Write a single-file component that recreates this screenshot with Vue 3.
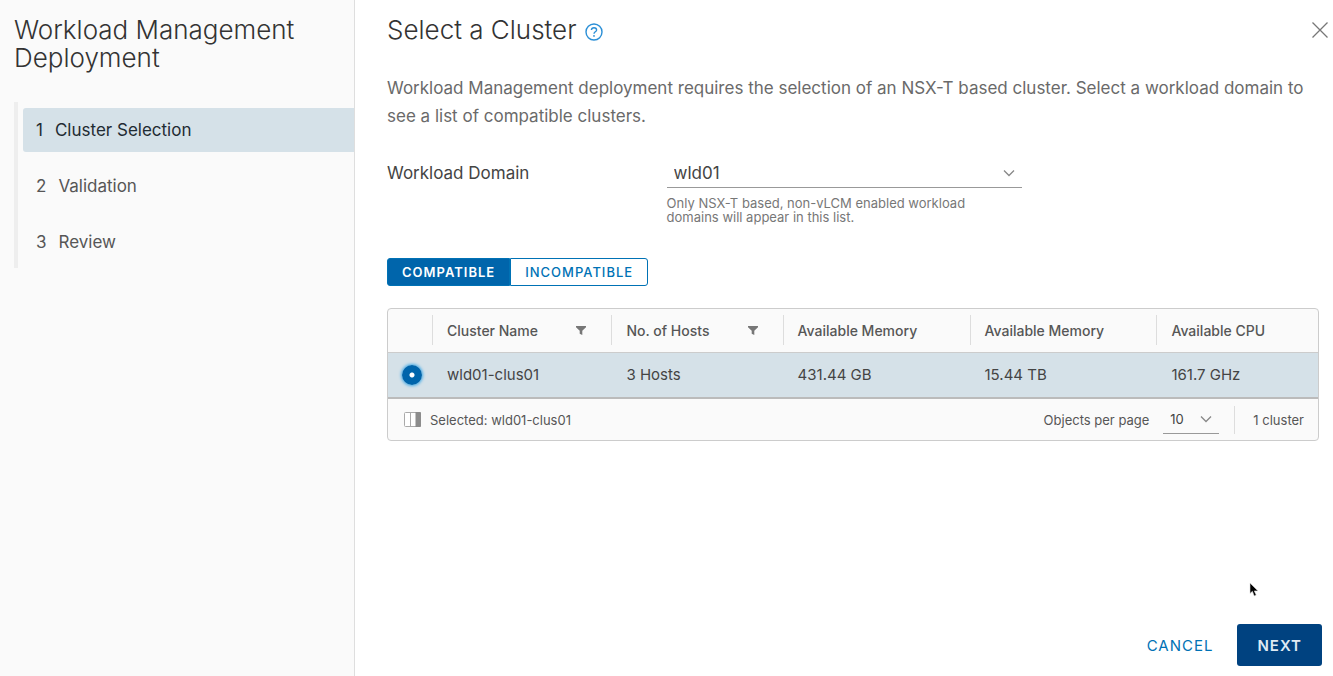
<script setup>
import { computed, ref } from 'vue'

const steps = ['Cluster Selection', 'Validation', 'Review']
const currentStep = ref(0)

const domain = ref('wld01')
const pageSize = ref(10)
const tab = ref('compatible')
const selected = ref('wld01-clus01')

const columns = [
  { key: 'name', label: 'Cluster Name', filter: true },
  { key: 'hosts', label: 'No. of Hosts', filter: true },
  { key: 'memory', label: 'Available Memory' },
  { key: 'storage', label: 'Available Memory' },
  { key: 'cpu', label: 'Available CPU' }
]

const clusters = ref([
  {
    name: 'wld01-clus01',
    hosts: '3 Hosts',
    memory: '431.44 GB',
    storage: '15.44 TB',
    cpu: '161.7 GHz'
  }
])

const total = computed(() => `${clusters.value.length} cluster`)
</script>

<template>
  <div class="wizard">
    <aside class="sidebar">
      <h1>Workload Management Deployment</h1>
      <ol class="steps">
        <li
          v-for="(step, i) in steps"
          :key="step">
          <button
            type="button"
            class="step"
            :class="{ active: i === currentStep }"
            @click="currentStep = i">
            <span>{{ i + 1 }}</span>
            <span>{{ step }}</span>
          </button>
        </li>
      </ol>
    </aside>

    <main class="content">
      <header class="content-header">
        <h2>Select a Cluster</h2>
        <button type="button" class="icon-button help" aria-label="Help">
          <svg width="18" height="18" viewBox="0 0 18 18" fill="none" stroke="currentColor">
            <circle cx="9" cy="9" r="8" stroke-width="1.4" />
            <path d="M6.4 7C6.5 5.5 7.6 4.7 9 4.7c1.5 0 2.6.9 2.6 2.2 0 1.9-2.6 1.9-2.6 3.8" stroke-width="1.4" />
            <circle cx="9" cy="12.9" r=".9" fill="currentColor" stroke="none" />
          </svg>
        </button>
        <button type="button" class="icon-button close" aria-label="Close">
          <svg width="18" height="18" viewBox="0 0 18 18" fill="none" stroke="currentColor" stroke-width="1.3">
            <path d="M1.5 1.5l15 15M16.5 1.500l-15 15" />
          </svg>
        </button>
      </header>

      <div class="content-body">
        <p class="description">
          Workload Management deployment requires the selection of an NSX-T based cluster. Select a workload domain to see a list of compatible clusters.
        </p>

        <div class="form-row">
          <label for="domain">Workload Domain</label>
          <div class="control">
            <div class="select">
              <select id="domain" v-model="domain">
                <option>wld01</option>
              </select>
              <svg width="12" height="8" viewBox="0 0 12 8" fill="none" stroke="currentColor" stroke-width="1.3">
                <path d="M1 1.5l5 5 5-5" />
              </svg>
            </div>
            <p class="hint">Only NSX-T based, non-vLCM enabled workload domains will appear in this list.</p>
          </div>
        </div>

        <div class="tabs">
          <button
            type="button"
            :class="{ active: tab === 'compatible' }"
            @click="tab = 'compatible'">
            COMPATIBLE
          </button>
          <button
            type="button"
            :class="{ active: tab === 'incompatible' }"
            @click="tab = 'incompatible'">
            INCOMPATIBLE
          </button>
        </div>

        <div class="datagrid">
          <table>
            <colgroup>
              <col class="col-radio">
              <col class="col-name">
              <col class="col-hosts">
              <col class="col-wide">
              <col class="col-wide">
              <col>
            </colgroup>
            <thead>
              <tr>
                <td />
                <th v-for="col in columns" :key="col.key" scope="col">
                  <div class="heading">
                    <span>{{ col.label }}</span>
                    <button
                      v-if="col.filter"
                      type="button"
                      class="icon-button filter"
                      :aria-label="`Filter ${col.label}`">
                      <svg width="10" height="9" viewBox="0 0 10 9" fill="currentColor">
                        <path d="M0 0h10v1.3L6.300 4.800V9L3.700 7.800v-3L0 1.300z" />
                      </svg>
                    </button>
                  </div>
                </th>
              </tr>
            </thead>
            <tbody>
              <tr
                v-for="cluster in clusters"
                :key="cluster.name"
                :class="{ selected: cluster.name === selected }">
                <td class="radio-cell">
                  <input
                    v-model="selected"
                    type="radio"
                    name="cluster"
                    :value="cluster.name"
                    :aria-label="cluster.name">
                </td>
                <td v-for="col in columns" :key="col.key">{{ cluster[col.key] }}</td>
              </tr>
            </tbody>
          </table>

          <div class="datagrid-footer">
            <button type="button" class="icon-button columns" aria-label="Manage columns">
              <svg width="17" height="15" viewBox="0 0 17 15">
                <rect x=".5" y=".5" width="16" height="14" rx="1" fill="#fff" stroke="#aaa" />
                <path d="M6.5 1v13" stroke="#aaa" />
                <path d="M11.5 0H16a1 1 0 0 1 1 1v13a1 1 0 0 1-1 1h-4.5z" fill="#8c8c8c" />
              </svg>
            </button>
            <span>Selected: {{ selected }}</span>
            <label class="per-page" for="page-size">Objects per page</label>
            <div class="select small">
              <select id="page-size" v-model="pageSize">
                <option :value="10">10</option>
                <option :value="20">20</option>
              </select>
              <svg width="12" height="8" viewBox="0 0 12 8" fill="none" stroke="currentColor" stroke-width="1.3">
                <path d="M1 1.5l5 5 5-5" />
              </svg>
            </div>
            <span class="total">{{ total }}</span>
          </div>
        </div>
      </div>

      <footer class="actions">
        <button type="button" class="cancel">CANCEL</button>
        <button type="button" class="next">NEXT</button>
      </footer>
    </main>

    <svg class="pointer" width="10" height="15" viewBox="0 0 10 15">
      <path d="M1 1v10.5l2.4-2.2L5.2 14l2-.9-1.9-4.2H9z" fill="#000" stroke="#ddd" stroke-width=".6" />
    </svg>
  </div>
</template>

<style>
body {
  margin: 0;
}
</style>

<style scoped>
.wizard {
  position: relative;
  display: flex;
  min-height: 100vh;
  background: #fff;
  color: #565656;
  font-family: Inter, 'Noto Sans', sans-serif;
  font-size: 17px;
}

.wizard *,
.wizard {
  box-sizing: border-box;
}

button,
select {
  font: inherit;
  color: inherit;
  cursor: pointer;
}

h1,
h2 {
  margin: 0;
  font-size: 26px;
  font-weight: 300;
  line-height: 28px;
  color: #333;
}

.sidebar {
  flex: 0 0 355px;
  padding: 16px 0 16px 14px;
  background: #fafafa;
  border-right: 1px solid #dedede;
}

.steps {
  display: flex;
  flex-direction: column;
  gap: 12px;
  margin: 30px 0 0;
  padding: 6px 0 4px 5px;
  border-left: 4px solid #eee;
  list-style: none;
}

.step {
  display: flex;
  gap: 12px;
  width: 100%;
  padding: 10px 13px;
  border: none;
  border-radius: 3px 0 0 3px;
  background: none;
  line-height: 24px;
  text-align: left;
}

.step.active {
  background: #d5e1e8;
  color: #1f2b33;
}

.content {
  flex: 1;
  display: flex;
  flex-direction: column;
  min-width: 0;
  padding: 16px 4px 10px 32px;
}

.content-header {
  display: flex;
  align-items: center;
  gap: 8px;
}

.icon-button {
  display: flex;
  padding: 0;
  border: none;
  background: none;
}

.help {
  padding-top: 4px;
  color: #2b8fd6;
}

.close {
  margin-left: auto;
  color: #777;
}

.content-body {
  flex: 1;
  padding: 30px 10px 0 0;
}

.description {
  margin: 0;
  line-height: 28px;
  color: #6a6a6a;
}

.form-row {
  display: flex;
  margin-top: 29px;
}

.form-row > label {
  flex: 0 0 30%;
  line-height: 28px;
  color: #444;
}

.control {
  flex: 0 1 355px;
}

.select {
  position: relative;
  border-bottom: 1px solid #999;
}

.select select {
  display: block;
  width: 100%;
  height: 28px;
  padding: 0 24px 0 7px;
  border: none;
  background: none;
  appearance: none;
  color: #444;
}

.select svg {
  position: absolute;
  top: 10px;
  right: 7px;
  color: #888;
  pointer-events: none;
}

.hint {
  max-width: 320px;
  margin: 8px 0 0;
  font-size: 13px;
  line-height: 14px;
  color: #777;
}

.tabs {
  display: flex;
  margin-top: 34px;
}

.tabs button {
  height: 28px;
  padding: 0 14px;
  border: 1px solid #0072b5;
  border-radius: 0 3px 3px 0;
  background: #fff;
  color: #0072b5;
  font-size: 13px;
  font-weight: 500;
  letter-spacing: 1px;
}

.tabs button:first-child {
  border-radius: 3px 0 0 3px;
}

.tabs button.active {
  background: #0065ab;
  color: #fff;
  font-weight: 600;
}

.datagrid {
  margin-top: 22px;
  border: 1px solid #ccc;
  border-radius: 4px;
  background: #fafafa;
  overflow: hidden;
}

table {
  width: 100%;
  border-collapse: collapse;
  table-layout: fixed;
}

.col-radio {
  width: 44px;
}

.col-name {
  width: 19.3%;
}

.col-hosts {
  width: 18.4%;
}

.col-wide {
  width: 20.1%;
}

th {
  height: 43px;
  padding: 0;
  font-size: 14px;
  font-weight: 500;
  text-align: left;
}

.heading {
  display: flex;
  align-items: center;
  justify-content: space-between;
  height: 30px;
  padding: 0 25px 0 14px;
  border-left: 1px solid #ddd;
  white-space: nowrap;
}

.filter {
  color: #777;
}

tbody td {
  height: 46px;
  padding: 0 0 0 15px;
  border-top: 1px solid #ccc;
  border-bottom: 2px solid #bbb;
  font-size: 15px;
  color: #444;
}

tbody tr.selected {
  background: #d5e1e8;
}

tbody .radio-cell {
  padding: 0 0 0 14px;
}

input[type='radio'] {
  display: block;
  width: 20px;
  height: 20px;
  margin: 0;
  border-radius: 50%;
  background: radial-gradient(circle, #fff 2px, #0065ab 3px);
  box-shadow: 0 0 3px 1px #4aaee8;
  appearance: none;
}

.datagrid-footer {
  display: flex;
  align-items: center;
  height: 41px;
  padding: 0 14px 0 16px;
  font-size: 13px;
}

.columns {
  margin-right: 9px;
}

.per-page {
  margin-left: auto;
  margin-right: 14px;
}

.small {
  width: 56px;
}

.total {
  margin-left: 15px;
  padding-left: 18px;
  border-left: 1px solid #ddd;
  line-height: 28px;
}

.actions {
  display: flex;
  justify-content: flex-end;
  gap: 8px;
  padding-right: 7px;
}

.actions button {
  height: 42px;
  padding: 0 16px;
  border: none;
  border-radius: 3px;
  background: none;
  color: #0072b5;
  font-size: 15px;
  letter-spacing: 1px;
}

.actions .next {
  padding: 0 20px;
  background: #004280;
  color: #dfeaf3;
  font-weight: 600;
}

.pointer {
  position: absolute;
  right: 74px;
  bottom: 79px;
}
</style>
